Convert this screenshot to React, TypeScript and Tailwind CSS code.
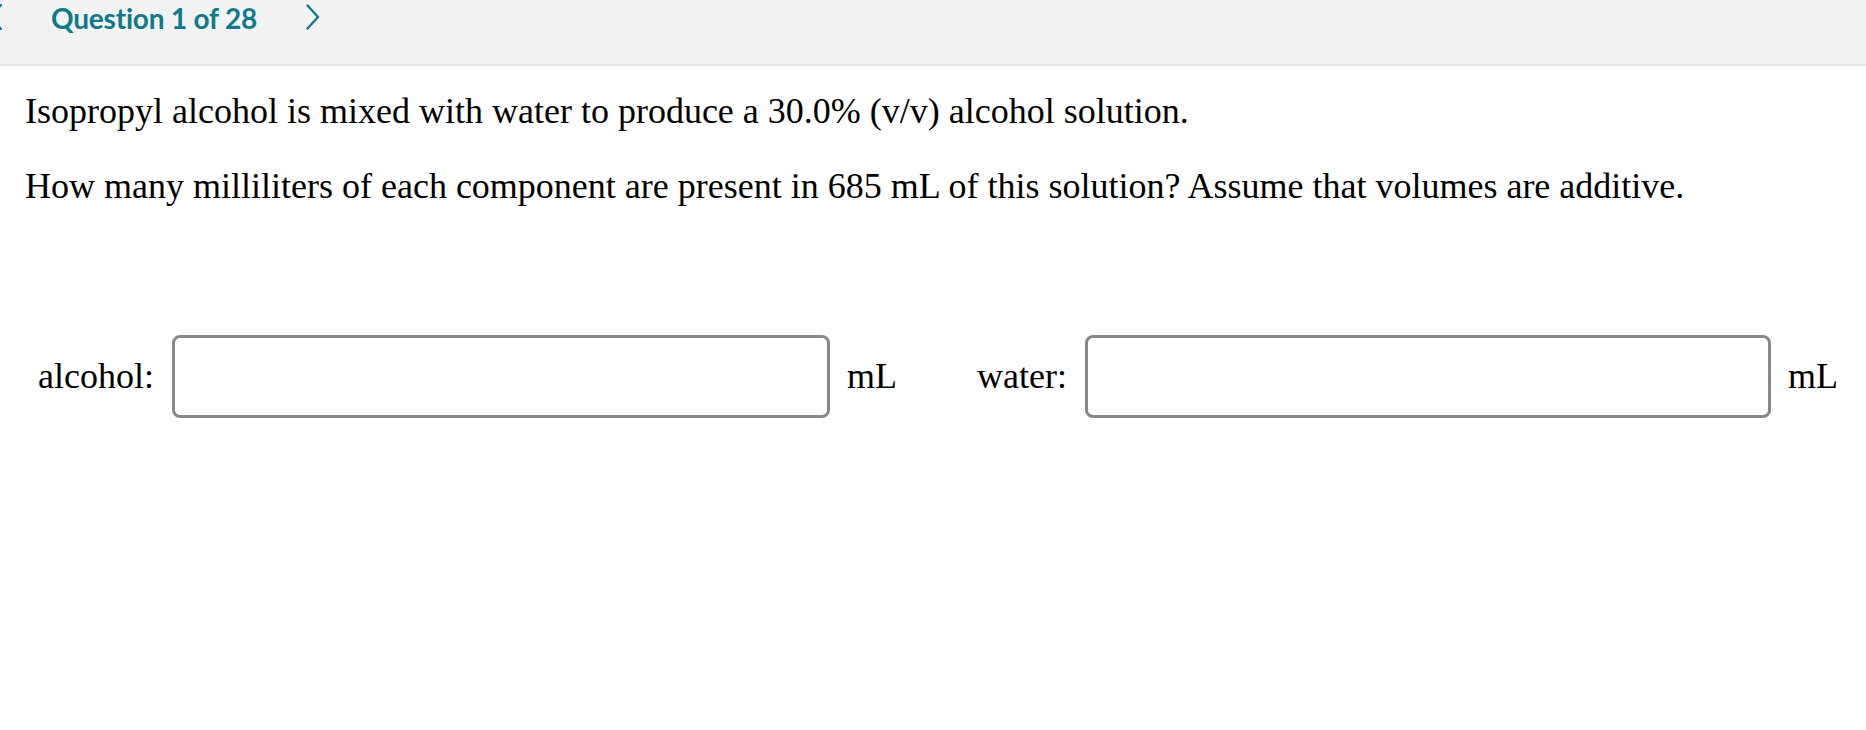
import React from "react";

const serif = { fontFamily: '"Liberation Serif", "Times New Roman", serif' };

function ChevronLeft() {
	return (
		<svg width="14" height="26" viewBox="0 0 14 26" fill="none" className="shrink-0">
			<path d="M13 1 L2 13 L13 25" stroke="#0e7a8c" strokeWidth="2.4" strokeLinecap="round" strokeLinejoin="round" />
		</svg>
	);
}

function ChevronRight() {
	return (
		<svg width="14" height="26" viewBox="0 0 14 26" fill="none" className="shrink-0">
			<path d="M1.5 1.5 L12 13 L1.5 24.5" stroke="#0e7a8c" strokeWidth="2.4" strokeLinecap="round" strokeLinejoin="round" />
		</svg>
	);
}

function AnswerField({ label, width }: { label: string; width: string }) {
	return (
		<div className="flex flex-row items-center">
			<label className="text-[36px] leading-[41px] text-black" style={serif}>
				{label}
			</label>
			<input
				type="text"
				className={`ml-[18px] h-[83px] ${width} rounded-[8px] border-[3px] border-[#888888] bg-white outline-none`}
			/>
			<span className="ml-[17px] text-[36px] leading-[41px] text-black" style={serif}>
				mL
			</span>
		</div>
	);
}

export default function App() {
	return (
		<div className="min-h-[730px] w-full bg-white">
			<div className="flex h-[66px] flex-row items-start border-b-2 border-[#e6e6e6] bg-[#f3f3f3] pt-[3px]">
				<div className="-ml-[12px] mt-[1px]">
					<ChevronLeft />
				</div>
				<div
					className="ml-[49px] text-[28px] font-bold leading-[30px] tracking-[-0.2px] text-[#0e7a8c]"
					style={{ fontFamily: 'Lato, "Open Sans", sans-serif' }}
				>
					Question 1 of 28
				</div>
				<div className="ml-[49px] mt-[1px]">
					<ChevronRight />
				</div>
			</div>

			<div className="px-[25px] pt-[25px] text-black" style={serif}>
				<p className="text-[36px] leading-[41px]">
					Isopropyl alcohol is mixed with water to produce a 30.0% (v/v) alcohol solution.
				</p>
				<p className="mt-[34px] text-[36px] leading-[41px]">
					How many milliliters of each component are present in 685 mL of this solution? Assume that volumes are additive.
				</p>

				<div className="mt-[128px] ml-[13px] flex flex-row items-center gap-[80px]">
					<AnswerField label="alcohol:" width="w-[658px]" />
					<AnswerField label="water:" width="w-[686px]" />
				</div>
			</div>
		</div>
	);
}
